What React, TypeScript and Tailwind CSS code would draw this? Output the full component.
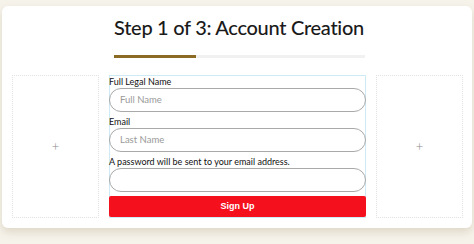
import React from "react";

const font = { fontFamily: '"Lato", "Liberation Sans", sans-serif' };

function Side() {
  return (
    <div className="w-[87px] h-[143px] border border-dotted border-[#e2e2e2] flex items-center justify-center text-[#8a8a8a] text-[13px] font-light">
      +
    </div>
  );
}

export default function App() {
  return (
    <div className="w-[474px] h-[244px] bg-[#f6f3eb] pt-[6px] pl-[2px] overflow-hidden" style={font}>
      <div className="w-[470px] h-[222px] bg-white rounded-[6px] shadow-[0_4px_8px_rgba(150,130,90,0.25)] flex flex-col items-center">
        <h1 className="mt-[7px] ml-[4px] text-[20px] leading-[28px] tracking-[-0.3px] text-[#1a1a1a] font-medium">
          Step 1 of 3: Account Creation
        </h1>
        <div className="mt-[14px] w-[251px] h-[3px] bg-[#f1f1f1] flex ml-[4px]">
          <div className="w-[82px] h-[3px] bg-[#8b6a24]" />
        </div>
        <div className="mt-[17px] flex gap-[10px] self-start ml-[10px]">
          <Side />
          <div className="w-[257px] h-[143px] border border-[#cdeaf5] flex flex-col">
            <label className="text-[9px] leading-[12px] text-[#111] -ml-px">Full Legal Name</label>
            <div className="h-[25px] rounded-full border border-[#a9a9a9] flex items-center pl-[10px] text-[9.5px] text-[#9a9a9a] -mx-px">
              Full Name
            </div>
            <label className="mt-[4px] text-[9px] leading-[12px] text-[#111] -ml-px">Email</label>
            <div className="h-[25px] rounded-full border border-[#a9a9a9] flex items-center pl-[10px] text-[9.5px] text-[#9a9a9a] -mx-px">
              Last Name
            </div>
            <label className="mt-[4px] text-[9px] leading-[12px] text-[#111] -ml-px">A password will be sent to your email address.</label>
            <div className="h-[25px] rounded-full border border-[#a9a9a9] -mx-px" />
            <button
              className="mt-[4px] h-[22px] bg-[#f5101e] rounded-[2px] text-white text-[9px] font-bold -mx-px"
              style={{ fontFamily: '"Liberation Sans", sans-serif' }}
            >
              Sign Up
            </button>
          </div>
          <Side />
        </div>
      </div>
    </div>
  );
}
